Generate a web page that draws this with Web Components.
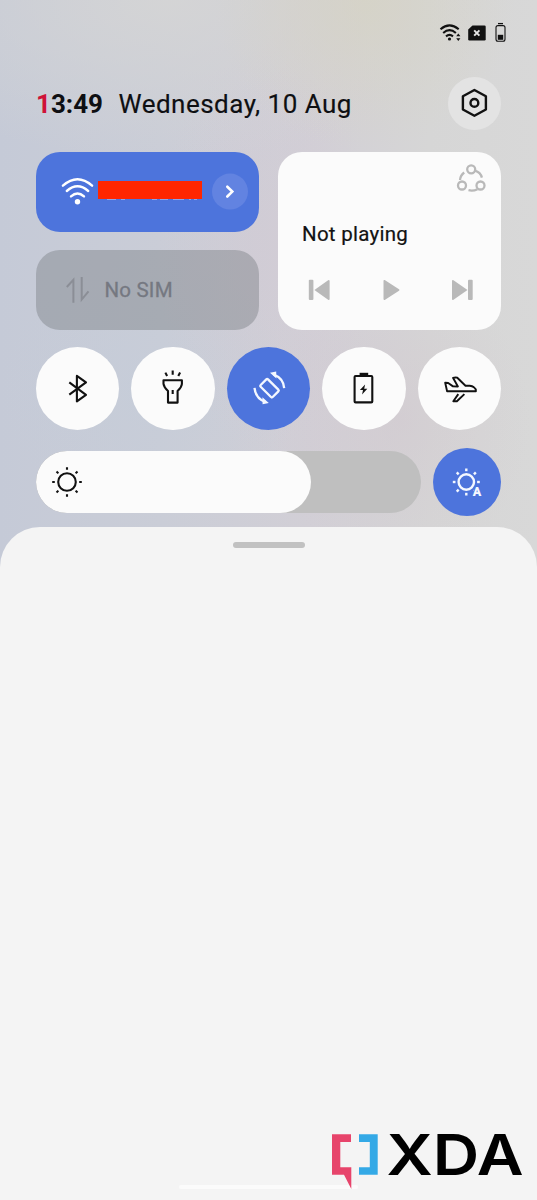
<!DOCTYPE html>
<html lang="en"><head><meta charset="utf-8"><title>Quick settings</title>
<style>html,body{margin:0;height:100%;background:#f4f4f4}</style></head>
<body><quick-settings></quick-settings>
<script>
const define = (name, css, html) => {
  const t = document.createElement('template');
  t.innerHTML = `<style>*{box-sizing:border-box}svg{display:block}${css}</style>${html}`;
  customElements.define(name, class extends HTMLElement {
    constructor() { super(); this.attachShadow({mode: 'open'}).append(t.content.cloneNode(true)); }
  });
};

define('status-bar', ':host{display:flex;justify-content:flex-end;height:77px;padding:20px 29px 0 0;color:#111}svg{height:26px}', `
<svg width="70" viewBox="438 20 70 26" fill="none" stroke="currentColor" stroke-width="2.1">
<path d="M440.5 29.3Q449.5 21.5 458.7 29.3M443.2 33Q449.5 27.4 455.9 33M446 36.4Q449.5 33.5 453 36.4"/><circle cx="449.5" cy="39" r="1.6" fill="currentColor" stroke="none"/>
<path d="M456.2 36.3l2.1-2.8 2.1 2.8zM456.2 38.3l2.1 2.8 2.1-2.8z" fill="currentColor" stroke="none"/>
<path d="M472.5 25.6H484.5a1.2 1.2 0 0 1 1.2 1.2V39.2a1.2 1.2 0 0 1-1.2 1.2H469.4a1.2 1.2 0 0 1-1.2-1.2V29.6z" fill="currentColor" stroke="none"/>
<path d="M474.2 30.4l5.2 5.2m0-5.2l-5.2 5.2" stroke="#e4e4e4" stroke-width="2"/>
<rect x="496" y="25.6" width="9" height="15.6" rx="2" stroke-width="1.1"/><path d="M498 23.6h5" stroke-width="1.3"/><path d="M497.8 34.8h5.4v5h-5.4z" fill="currentColor" stroke="none"/></svg>`);

define('date-header', `:host{display:flex;justify-content:space-between;align-items:center;height:53px;color:#0e0f12;font-size:26px;line-height:53px;white-space:nowrap}
div{display:flex;padding-top:1px}b{font-weight:700;width:82.5px;letter-spacing:0}i{font-style:normal;color:#cf1238}span{letter-spacing:.48px;-webkit-text-stroke:.15px}
button{border:0;padding:0;width:53px;height:53px;border-radius:50%;background:#e3e3e3;color:#111}`, `
<div><b><i>1</i>3:49</b><span>Wednesday, 10 Aug</span></div>
<button aria-label="Settings"><svg viewBox="448 77 53 53" width="53" height="53" fill="none" stroke="currentColor" stroke-width="2.4" stroke-linejoin="round"><path d="M474.4 90l11.5 6.3v13.2l-11.5 6.3-11.5-6.3V96.3z"/><circle cx="474.4" cy="102.9" r="3.9"/></svg></button>`);

define('wifi-tile', ':host{display:block;height:80px;border-radius:24px;background:#4d74dc;overflow:hidden}', `
<svg width="223" height="80" viewBox="36 152 223 80" fill="none" stroke="#fff" stroke-linecap="round" stroke-width="2.4">
<path d="M62.9 185.7Q77.5 173 92.1 185.7M66.8 191Q77.5 181.7 88.2 191M71 196.4Q77.5 190.6 84 196.4"/><circle cx="77.5" cy="201.8" r="2.7" fill="#fff" stroke="none"/>
<path d="M107 199.2h9M121 199.2h4M152 199.2h5M160 199.2h8M173 199.2h11M189 199.2h2M194 199.2h3" stroke="#a9b9ec" stroke-width="1" stroke-linecap="butt"/>
<path d="M98 181h104v18H98z" fill="#ff2600" stroke="none"/><circle cx="230" cy="191.6" r="18" fill="#6283e1" stroke="none"/><path d="M227.3 186.7l5 4.9-5 4.9" stroke-width="2.6"/></svg>`);

define('sim-tile', `:host{display:flex;align-items:center;gap:14.5px;padding-left:29px;height:80px;border-radius:24px;background:rgba(116,119,124,.4);color:#757881;font-size:20.5px}
span{letter-spacing:.2px;line-height:24px;-webkit-text-stroke:.3px}`, `
<svg width="25" height="30" viewBox="65 275 25 30" fill="none" stroke="#8b8e96" stroke-width="2"><path d="M66.8 287l6.6-7.2v23M81.7 277v22.6l6.8-8.2"/></svg><span>No SIM</span>`);

define('media-card', `:host{display:flex;flex-direction:column;height:178px;border-radius:24px;background:#fbfbfb;color:#121212;padding:10px 12px 0 24px}
.cast{align-self:flex-end}span{font-size:20.5px;line-height:26px;letter-spacing:.26px;margin-top:25px;font-weight:400;-webkit-text-stroke:.2px}nav{display:flex;justify-content:space-between;margin:32px 16px 0 6px}`, `
<svg class="cast" width="34" height="34" viewBox="455 162 34 34" fill="none" stroke="#b9b9b9" stroke-width="2.3"><circle cx="471.2" cy="169.3" r="4"/><circle cx="462" cy="185.5" r="4"/><circle cx="480.5" cy="185.5" r="4"/><path d="M464.2 172.5Q460.3 175.5 460 180M475 170.7Q480.5 172.3 481.9 177.6M468.5 190.2Q473 191.4 477.5 189.2"/></svg>
<span>Not playing</span>
<nav><svg width="22" height="22" viewBox="308 279 22 22" fill="#b9b9b9"><rect x="308.8" y="279.8" width="4.6" height="20.2" rx="1"/><path d="M329.6 281v18a1 1 0 0 1-1.5.8L314.4 290l13.7-9.8a1 1 0 0 1 1.5.8z"/></svg>
<svg width="22" height="22" viewBox="380.5 279 22 22" fill="#b9b9b9"><path d="M384 281v18a1 1 0 0 0 1.6.8l13.9-9a1 1 0 0 0 0-1.6l-13.9-9a1 1 0 0 0-1.6.8z"/></svg>
<svg width="22" height="22" viewBox="451 279 22 22" fill="#b9b9b9"><path d="M452 281v18a1 1 0 0 0 1.5.8L467.5 290l-14-9.8a1 1 0 0 0-1.5.8z"/><rect x="468" y="279.8" width="4.7" height="20.2" rx="1"/></svg></nav>`);

define('round-toggle', `:host{display:block;width:83.4px;height:83.4px;border-radius:50%;background:#fbfbfb;color:#111;flex:none}
:host([on]){background:#4d74dc;color:#f4f8ff}:host([small]){width:68px;height:68px}`, '<slot></slot>');

define('toggle-row', ':host{display:flex;justify-content:space-between;margin-top:16.6px}svg{stroke-linejoin:round}', `
<round-toggle><svg viewBox="36 346.6 83.4 83.4" fill="none" stroke="currentColor" stroke-width="2.1"><path d="M69.3 382l16.7 12.4-9.1 6.6V375.5L86 382 69.3 394.2"/></svg></round-toggle>
<round-toggle><svg viewBox="131.3 346.6 83.4 83.4" fill="none" stroke="currentColor" stroke-width="2.1"><path d="M163.8 379.8h18.4v3.8q-.3 3.3-4.3 7V402.2h-9.6V390.6q-4.1-3.7-4.5-7zM173 389.5v4.2M173 370v4.3M165.7 372.2l1.7 3.4M180.4 372.2l-1.8 3.4"/></svg></round-toggle>
<round-toggle on><svg viewBox="226.8 346.6 83.4 83.4" fill="none" stroke="currentColor" stroke-width="2.3"><rect x="260.8" y="382.6" width="17" height="10.4" rx="1.2" transform="rotate(45 269.3 387.8)"/><path d="M273.5 374.2Q283.3 377.8 284 387.8M265 401.5Q255.2 397.8 254.3 387.5"/><path d="M269.8 372.4L276 371.2 276.2 378.2zM268.6 402.7l-6.2 1.2-.2-7z" fill="currentColor" stroke="none"/></svg></round-toggle>
<round-toggle><svg viewBox="322.4 346.6 83.4 83.4" fill="none" stroke="currentColor" stroke-width="2.1"><rect x="355" y="375.6" width="17.7" height="26.4" rx="1"/><path d="M360 373.7h8.6" stroke-width="2.6"/><path d="M365.5 384l-5.2 5.6h3.1l-.9 4.6 5.2-5.8h-3.1z" fill="currentColor" stroke="none"/></svg></round-toggle>
<round-toggle><svg viewBox="417.9 346.6 83.4 83.4" fill="none" stroke="currentColor" stroke-width="1.9"><path d="M445.1 382.3l1.9 8.5h28.8q.2-2.4-2-3.9-1.6-1.3-4.2-1.5l-4.2-.1-8.2-8q-2-.5-4.3.1l4.9 8.7-4.9-.1-4.8-3.4zM458.2 393.7l-5 7.2h3.6l7.5-7.2"/></svg></round-toggle>`);

const rays = (x, y, a, b) => [0,45,90,135,180,225,270,315].map(d => `<path d="M${x+a} ${y}H${x+b}" transform="rotate(${d} ${x} ${y})"/>`).join('');
define('brightness-row', `:host{display:flex;align-items:center;justify-content:space-between;height:68px;margin-top:18px}
.track{width:384.5px;height:62.5px;border-radius:32px;background:#bfbfbf;overflow:hidden}.fill{width:275.2px;height:100%;border-radius:32px;background:#fbfbfb;padding:15px;color:#111}
text{font:900 12.5px Roboto,sans-serif}`, `
<div class="track"><div class="fill"><svg width="32" height="32" viewBox="51 466 32 32" fill="none" stroke="currentColor" stroke-width="2.1"><circle cx="67" cy="482" r="8.8"/>${rays(67,482,12.2,14.8)}</svg></div></div>
<round-toggle on small><svg width="68" height="68" viewBox="433 448 68 68" fill="none" stroke="currentColor" stroke-width="2.4"><circle cx="466.3" cy="482" r="7.7"/>${rays(466.3,482,10.8,13.5)}
<text x="472.8" y="495.6" fill="currentColor" stroke="#4d74dc" stroke-width="2.6" paint-order="stroke">A</text></svg></round-toggle>`);

define('xda-logo', ':host{display:block}svg{overflow:visible}text{font:600 56.4px/1 Inter,"DejaVu Sans",sans-serif}', `
<svg width="194" height="60" viewBox="331 1132 194 60"><path fill="#e7446b" d="M332 1134.2h19v7.8h-10.7v25.2H351.3v21.7l-7.3-14.2h-12z"/><path fill="#34a9e6" d="M359 1134.2h18.7v40.5H359v-7.5h10.8V1142H359z"/><text x="386.5" y="1174.7" textLength="137" lengthAdjust="spacingAndGlyphs">XDA</text></svg>`);

define('notification-sheet', `:host{display:flex;flex-direction:column;height:673px;margin-top:11px;border-radius:40px 40px 0 0;background:#f4f4f4;position:relative}
.grip{width:72px;height:6px;border-radius:3px;background:#c1c1c1;margin:15px auto 0}.home{width:179px;height:4px;border-radius:2px;background:#fbfbfb;margin:auto auto 11px}xda-logo{position:absolute;right:12px;bottom:8px}`,
`<div class="grip"></div><div class="home"></div><xda-logo></xda-logo>`);

define('quick-settings', `:host{display:block;width:537px;height:1200px;font-family:Roboto,sans-serif;
background:radial-gradient(150px 150px at 365px 0,rgba(214,211,194,.7),transparent),radial-gradient(130px 150px at 400px 420px,rgba(208,195,205,.4),transparent),radial-gradient(110px 200px at 265px 250px,rgba(211,201,212,.4),transparent),radial-gradient(150px 130px at 150px 390px,rgba(195,205,218,.5),transparent),radial-gradient(330px 160px at 170px 0,rgba(213,213,213,.9),transparent),linear-gradient(90deg,#c5cad7 0,#cacdd7 30%,#d2cfd6 58%,#d6d6d6 80%,#d8d8d8)}
main{padding:0 36px}.tiles{display:grid;grid-template-columns:223px 223px;justify-content:space-between;margin-top:22px}.left{display:flex;flex-direction:column;gap:18px}`,
`<status-bar></status-bar><main><date-header></date-header><section class="tiles"><div class="left"><wifi-tile></wifi-tile><sim-tile></sim-tile></div><media-card></media-card></section><toggle-row></toggle-row><brightness-row></brightness-row></main><notification-sheet></notification-sheet>`);
</script></body></html>
